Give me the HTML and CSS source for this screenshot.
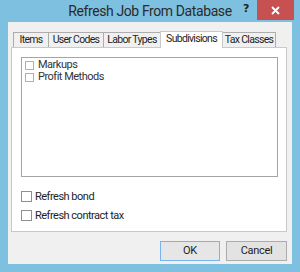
FILE: index.html
```html
<!DOCTYPE html>
<html lang="en">
<head>
	<meta charset="UTF-8">
	<title>Refresh Job From Database</title>
	<link rel="stylesheet" href="styles.css">
</head>
<body>
	<div class="window">
		<!-- title bar -->
		<div class="titlebar">
			<span class="title">Refresh Job From Database</span>
			<span class="help">?</span>
			<span class="close">
				<svg width="9" height="9" viewBox="0 0 9 9">
					<path d="M1 1L8 8M8 1L1 8" stroke="#fff" stroke-width="1.8"/>
				</svg>
			</span>
		</div>
		<!-- client area -->
		<div class="client">
			<ul class="tabs">
				<li class="t1">Items</li>
				<li class="t2">User Codes</li>
				<li class="t3">Labor Types</li>
				<li class="t4 on">Subdivisions</li>
				<li class="t5">Tax Classes</li>
			</ul>
			<div class="panel">
				<ul class="list">
					<li><span class="box small"></span>Markups</li>
					<li><span class="box small"></span>Profit Methods</li>
				</ul>
				<div class="opts">
					<label><span class="box"></span>Refresh bond</label>
					<label><span class="box"></span>Refresh contract tax</label>
				</div>
			</div>
			<div class="buttons">
				<div class="btn default">OK</div>
				<div class="btn">Cancel</div>
			</div>
		</div>
	</div>
</body>
</html>
```

FILE: styles.css
```css
* {
	margin: 0;
	padding: 0;
	box-sizing: border-box;
}
li {
	list-style: none;
}
body {
	width: 300px;
	height: 272px;
	overflow: hidden;
	font-family: Roboto, "Liberation Sans", Arial, sans-serif;
	font-size: 11px;
	letter-spacing: -0.5px;
	color: #1e1e1e;
}
.window {
	width: 300px;
	height: 272px;
	background-color: #7ec0e0;
	display: flex;
	flex-direction: column;
}
.titlebar {
	position: relative;
	height: 22px;
	text-align: center;
}
.title {
	display: block;
	padding-top: 3px;
	font-size: 14px;
	letter-spacing: -0.4px;
	line-height: 17px;
	color: #2b2b2b;
}
.help {
	position: absolute;
	left: 243px;
	top: 2px;
	font-family: "DejaVu Sans", sans-serif;
	font-weight: bold;
	font-size: 11px;
	letter-spacing: 0;
	color: #222;
}
.close {
	position: absolute;
	left: 257px;
	top: 0;
	width: 37px;
	height: 20px;
	background-color: #c75050;
	display: flex;
	align-items: center;
	justify-content: center;
}
.close svg {
	display: block;
}
.client {
	margin: 0 8px;
	height: 242px;
	background-color: #f0f0f0;
	padding: 10px 5px 0 3px;
	display: flex;
	flex-direction: column;
}
.tabs {
	display: flex;
	align-items: flex-end;
	height: 15px;
	padding-left: 2px;
	position: relative;
	z-index: 1;
}
.tabs li {
	height: 15px;
	line-height: 14px;
	font-size: 10.5px;
	letter-spacing: -0.7px;
	text-align: center;
	white-space: nowrap;
	border: 1px solid #adadad;
	border-bottom: none;
	margin-right: -1px;
	background-color: #f0f0f0;
}
.tabs .t1 { width: 36px; }
.tabs .t2 { width: 56px; }
.tabs .t3 { width: 58px; }
.tabs .t4 { width: 63px; }
.tabs .t5 { width: 54px; }
.tabs li.on {
	height: 17px;
	margin-bottom: -1px;
	line-height: 13px;
	background-color: #fff;
	border-color: #c9c9c9;
	position: relative;
	z-index: 2;
}
.panel {
	height: 185px;
	border: 1px solid #c9c9c9;
	background-color: #fff;
	padding: 9px 8px 0 9px;
}
.list {
	height: 120px;
	border: 1px solid #a5a5a5;
	padding: 1px 0 0 3px;
}
.list li {
	display: flex;
	align-items: center;
	height: 12px;
	line-height: 12px;
	color: #333;
}
.box {
	display: inline-block;
	flex: none;
	width: 11px;
	height: 11px;
	border: 1px solid #8f8f8f;
	background-color: #fff;
	margin-right: 3px;
}
.box.small {
	width: 9px;
	height: 9px;
	border-color: #b0b0b0;
	margin-right: 4px;
}
.opts {
	padding-top: 14px;
	display: flex;
	flex-direction: column;
	gap: 8px;
}
.opts label {
	display: flex;
	align-items: center;
	height: 11px;
	line-height: 11px;
}
.buttons {
	display: flex;
	justify-content: flex-end;
	gap: 6px;
	margin-top: 9px;
}
.btn {
	width: 61px;
	height: 20px;
	line-height: 18px;
	text-align: center;
	border: 1px solid #acacac;
	background-color: #e3e3e3;
	font-size: 11px;
	letter-spacing: -0.3px;
}
.btn.default {
	width: 60px;
	border-color: #7ab3eb;
	background-color: #e6e6e6;
}
```
